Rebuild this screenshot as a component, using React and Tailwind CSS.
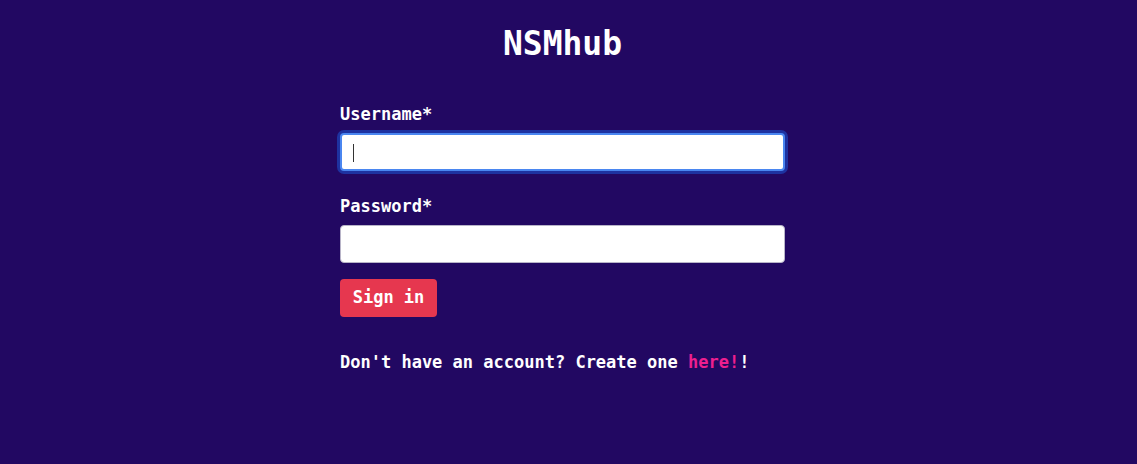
export default function App() {
  const mono = { fontFamily: '"DejaVu Sans Mono", "Liberation Mono", monospace' };
  return (
    <div className="min-h-[464px] w-full bg-[#220862] text-white" style={mono}>
      <div className="mx-auto w-[457px] pt-[24px]">
        <div className="w-[445px] flex flex-col">
          <h1 className="text-center text-[33px] leading-[40px] font-bold">NSMhub</h1>
          <label className="mt-[38px] text-[17px] leading-[24px] font-bold">Username*</label>
          <div className="relative mt-[7px] h-[38px] rounded-[4px] bg-white border-2 border-[#4a86f0] ring-[3px] ring-[#1e32a0]">
            <span className="absolute left-[11px] top-[9px] h-[18px] w-px bg-[#333]" />
          </div>
          <label className="mt-[23px] text-[17px] leading-[24px] font-bold">Password*</label>
          <div className="mt-[7px] h-[38px] rounded-[4px] bg-white border border-[#b8b4c8]" />
          <div className="mt-[16px]">
            <button className="h-[38px] w-[97px] rounded-[4px] bg-[#e6374f] text-[17px] font-bold text-white" style={mono}>Sign in</button>
          </div>
          <p className="mt-[33px] text-[17px] leading-[24px] font-bold">
            Don't have an account? Create one <span className="text-[#ee1f8f]">here!</span>!
          </p>
        </div>
      </div>
    </div>
  );
}
